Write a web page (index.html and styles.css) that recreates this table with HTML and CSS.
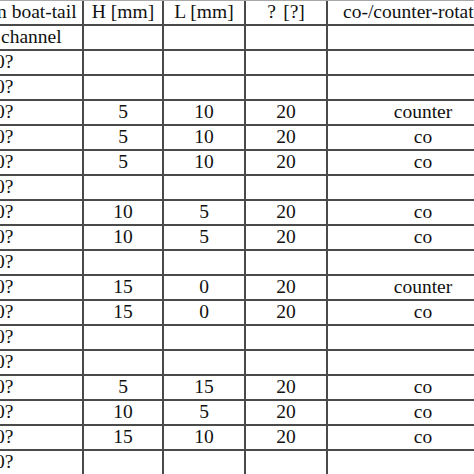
FILE: index.html
```html
<!DOCTYPE html>
<html>
<head>
<meta charset="utf-8">
<link rel="stylesheet" href="styles.css">
</head>
<body>
<table class="grid">
  <tr class="head"><td class="c1 t-boat">n boat-tail</td><td>H [mm]</td><td>L [mm]</td><td class="ang">? [?]</td><td class="c5 t-rot">co-/counter-rotat</td></tr>
  <tr><td class="c1 t-ch">channel</td><td></td><td></td><td></td><td class="c5"></td></tr>
  <tr><td class="c1 t-q">0?</td><td></td><td></td><td></td><td class="c5"></td></tr>
  <tr><td class="c1 t-q">0?</td><td></td><td></td><td></td><td class="c5"></td></tr>
  <tr><td class="c1 t-q">0?</td><td>5</td><td>10</td><td>20</td><td class="c5">counter</td></tr>
  <tr><td class="c1 t-q">0?</td><td>5</td><td>10</td><td>20</td><td class="c5">co</td></tr>
  <tr><td class="c1 t-q">0?</td><td>5</td><td>10</td><td>20</td><td class="c5">co</td></tr>
  <tr><td class="c1 t-q">0?</td><td></td><td></td><td></td><td class="c5"></td></tr>
  <tr><td class="c1 t-q">0?</td><td>10</td><td>5</td><td>20</td><td class="c5">co</td></tr>
  <tr><td class="c1 t-q">0?</td><td>10</td><td>5</td><td>20</td><td class="c5">co</td></tr>
  <tr><td class="c1 t-q">0?</td><td></td><td></td><td></td><td class="c5"></td></tr>
  <tr><td class="c1 t-q">0?</td><td>15</td><td>0</td><td>20</td><td class="c5">counter</td></tr>
  <tr><td class="c1 t-q">0?</td><td>15</td><td>0</td><td>20</td><td class="c5">co</td></tr>
  <tr><td class="c1 t-q">0?</td><td></td><td></td><td></td><td class="c5"></td></tr>
  <tr><td class="c1 t-q">0?</td><td></td><td></td><td></td><td class="c5"></td></tr>
  <tr><td class="c1 t-q">0?</td><td>5</td><td>15</td><td>20</td><td class="c5">co</td></tr>
  <tr><td class="c1 t-q">0?</td><td>10</td><td>5</td><td>20</td><td class="c5">co</td></tr>
  <tr><td class="c1 t-q">0?</td><td>15</td><td>10</td><td>20</td><td class="c5">co</td></tr>
  <tr><td class="c1 t-q">0?</td><td></td><td></td><td></td><td class="c5"></td></tr>
</table>
</body>
</html>
```
FILE: styles.css
```css
html, body {
  margin: 0;
  padding: 0;
  background: #ffffff;
  overflow: hidden;
  width: 474px;
  height: 474px;
}
.grid {
  border-collapse: separate;
  border-spacing: 0;
  border-top: 1px solid #a8a8a8;
  table-layout: fixed;
  width: 518px;
  font-family: "Liberation Serif", "Times New Roman", serif;
  font-size: 19.5px;
  color: #111111;
}
.grid td {
  box-sizing: border-box;
  height: 25px;
  padding: 0 0 1px 0;
  line-height: 22px;
  border-right: 2px solid #4a4a4a;
  border-bottom: 2px solid #4a4a4a;
  text-align: center;
  white-space: nowrap;
  vertical-align: top;
}
.grid td:nth-child(1) { width: 84px; }
.grid td:nth-child(2) { width: 80px; }
.grid td:nth-child(3) { width: 82px; }
.grid td:nth-child(4) { width: 82px; }
.grid td:nth-child(5) { width: 190px; border-right: none; }
.grid td.c1 {
  text-align: left;
  overflow: visible;
}
.t-boat { text-indent: -3px; }
.t-ch { text-indent: 1px; }
.t-q { text-indent: -5px; }
.ang { word-spacing: 2.5px; }
.grid td.t-rot {
  text-align: left;
  padding-left: 15px;
}
```
